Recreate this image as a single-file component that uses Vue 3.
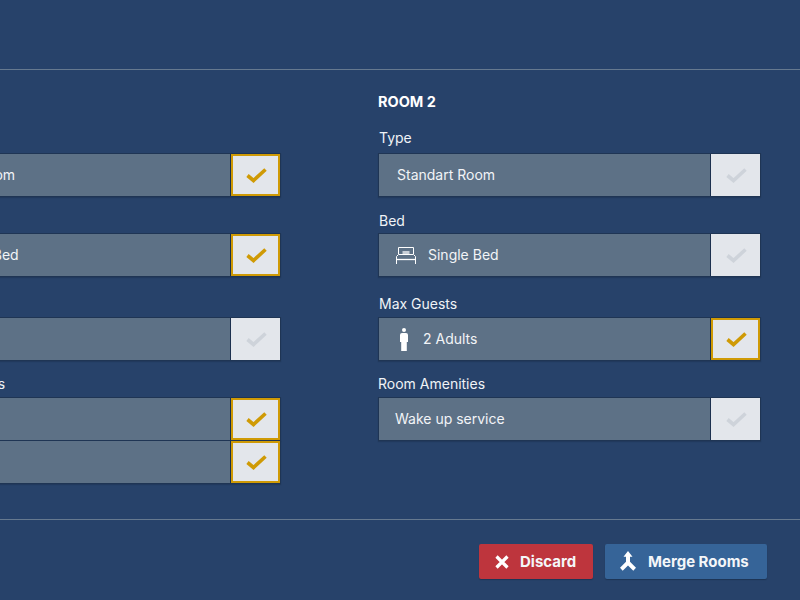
<script setup>
const leftFields = [
  { label: 'Type', cls: 'f-type', rows: [{ text: 'Standart Room', on: true, cls: 'plain' }] },
  { label: 'Bed', cls: 'f-bed', rows: [{ text: 'Single Bed', icon: 'bed', on: true, cls: 'with-bed' }] },
  { label: 'Max Guests', cls: 'f-guests', rows: [{ text: '2 Adults', icon: 'person', on: false, cls: 'with-person' }] },
  {
    label: 'Room Amenities',
    cls: 'f-amen',
    rows: [
      { text: 'Wi-Fi', on: true, cls: 'plain' },
      { text: 'Parking', on: true, cls: 'plain' },
    ],
  },
]

const rightFields = [
  { label: 'Type', cls: 'f-type', rows: [{ text: 'Standart Room', on: false, cls: 'plain' }] },
  { label: 'Bed', cls: 'f-bed', rows: [{ text: 'Single Bed', icon: 'bed', on: false, cls: 'with-bed' }] },
  { label: 'Max Guests', cls: 'f-guests', rows: [{ text: '2 Adults', icon: 'person', on: true, cls: 'with-person' }] },
  { label: 'Room Amenities', cls: 'f-amen', rows: [{ text: 'Wake up service', on: false, cls: 'wake' }] },
]

const columns = [
  { title: 'ROOM 1', cls: 'left', fields: leftFields },
  { title: 'ROOM 2', cls: 'right', fields: rightFields },
]
</script>

<template>
  <div class="page">
    <header class="top"></header>

    <main class="rooms">
      <section v-for="col in columns" :key="col.title" class="room" :class="col.cls">
        <h2 class="title">{{ col.title }}</h2>
        <div v-for="field in col.fields" :key="field.label" class="field" :class="field.cls">
          <div class="label">{{ field.label }}</div>
          <div v-for="row in field.rows" :key="row.text" class="row">
            <div class="bar" :class="row.cls">
              <svg v-if="row.icon === 'bed'" class="ico-bed" width="22" height="20" viewBox="0 0 22 20" fill="none" stroke="#fff" stroke-width="1">
                <path d="M3.500 9V2.500h15V9" />
                <path d="M7.500 6h7v3h-7z" fill="#c9d0d8" stroke="none" />
                <path d="M1.500 19V11.500L3.500 9.500h15l2 2V19" />
                <path d="M1 14.500h20" stroke-width="1.300" />
              </svg>
              <svg v-if="row.icon === 'person'" class="ico-person" width="8" height="23" viewBox="0 0 8 23" fill="#fff">
                <circle cx="4" cy="2" r="2" />
                <path d="M2 5h4Q8 5 8 7v7H6.800v9H1.200v-9H0V7Q0 5 2 5z" />
              </svg>
              <span class="value">{{ row.text }}</span>
            </div>
            <div class="check" :class="{ on: row.on }">
              <svg width="22" height="17" viewBox="0 0 22 17" fill="none" stroke-width="3.600">
                <path d="M2.500 8.500l6 5L20.500 2.500" />
              </svg>
            </div>
          </div>
        </div>
      </section>
    </main>

    <footer class="actions">
      <button class="btn discard">
        <svg width="14" height="14" viewBox="0 0 14 14" stroke="#fff" stroke-width="3.200" fill="none">
          <path d="M1.500 1.500l11 11M12.500 1.500l-11 11" />
        </svg>
        Discard
      </button>
      <button class="btn merge">
        <svg width="16" height="21" viewBox="0 0 16 21" fill="#fff">
          <path d="M8 0l4.500 5.800H10v5l6 6-2.700 3L8 14.500 2.700 19.800 0 16.800l6-6v-5H3.500z" />
        </svg>
        Merge Rooms
      </button>
    </footer>
  </div>
</template>

<style>
html, body {
  margin: 0;
  background: #27426a;
}
</style>

<style scoped>
.page {
  width: 800px;
  height: 600px;
  overflow: hidden;
  background: #27426a;
  color: #fff;
  font-family: Inter, "Liberation Sans", sans-serif;
}
.top {
  height: 69px;
  border-bottom: 1px solid #66798f;
}
.rooms {
  height: 449px;
  display: flex;
  gap: 97px;
  margin-left: -102px;
  border-bottom: 1px solid #66798f;
}
.room {
  flex: none;
  width: 383px;
  padding-top: 22px;
}
.title {
  margin: 0;
  height: 20px;
  font-size: 14.500px;
  line-height: 20px;
  font-weight: 700;
}
.label {
  font-size: 14px;
  line-height: 20px;
  padding-left: 1px;
  color: #f0f3f6;
}
.field > .label {
  margin-bottom: 2px;
}
.f-type {
  margin-top: 16px;
}
.f-type > .label {
  margin-bottom: 5px;
}
.f-bed {
  margin-top: 14px;
}
.f-guests {
  margin-top: 17px;
}
.f-amen {
  margin-top: 13px;
}
.f-amen > .label {
  padding-left: 0;
  margin-bottom: 3px;
}
.f-guests > .label {
  margin-bottom: 3px;
}
.row {
  display: flex;
  height: 44px;
  box-sizing: border-box;
  border: 1px solid #1f3554;
  box-shadow: 0 1px 1px rgba(16, 32, 56, 0.25);
}
.row + .row {
  margin-top: -1px;
}
.bar {
  flex: 1;
  display: flex;
  align-items: center;
  background: #5d7186;
  border-right: 1px solid #1c304e;
  font-size: 14px;
  color: #f2f4f7;
}
.value {
  margin-bottom: 2px;
}
.plain {
  padding-left: 18px;
}
.wake {
  padding-left: 16px;
}
.with-bed {
  padding-left: 16px;
}
.with-person {
  padding-left: 21px;
}
.ico-bed {
  margin-right: 11px;
}
.ico-person {
  margin-right: 15px;
}
.check {
  width: 49px;
  flex: none;
  display: flex;
  align-items: center;
  justify-content: center;
  box-sizing: border-box;
  background: #e3e6eb;
  border: 2px solid #e3e6eb;
  stroke: #ced3da;
}
.check.on {
  border-color: #cf9a05;
  stroke: #cf9a05;
}
.left .row {
  position: relative;
}
/* link between the two rooms, faint where it runs over the bars */
.left .row:first-of-type::before {
  content: "";
  position: absolute;
  left: 0;
  top: 20px;
  width: 550px;
  height: 1px;
  background: rgba(255, 255, 255, 0.04);
}
.left .row:first-of-type::after {
  content: "";
  position: absolute;
  left: calc(100% + 1px);
  top: 20px;
  width: 97px;
  height: 1px;
  background: #45597a;
}
.left .f-bed .row::before,
.left .f-bed .row::after {
  top: 19px;
}
.left .f-guests .row::before,
.left .f-guests .row::after {
  top: 16px;
}
.left .f-amen .row::before,
.left .f-amen .row::after {
  top: 17px;
}
.actions {
  display: flex;
  justify-content: flex-end;
  gap: 12px;
  padding: 24px 33px 0 0;
}
.btn {
  height: 35px;
  display: flex;
  align-items: center;
  border: 0;
  border-radius: 2px;
  color: #f4f6f9;
  font-family: Inter, "Liberation Sans", sans-serif;
  font-size: 15px;
  font-weight: 700;
  box-shadow: 0 1px 1px rgba(16, 32, 56, 0.4);
}
.discard {
  width: 114px;
  padding-left: 16px;
  gap: 11px;
  background: #be353d;
}
.merge {
  width: 162px;
  padding-left: 15px;
  gap: 12px;
  background: #366498;
}
</style>
